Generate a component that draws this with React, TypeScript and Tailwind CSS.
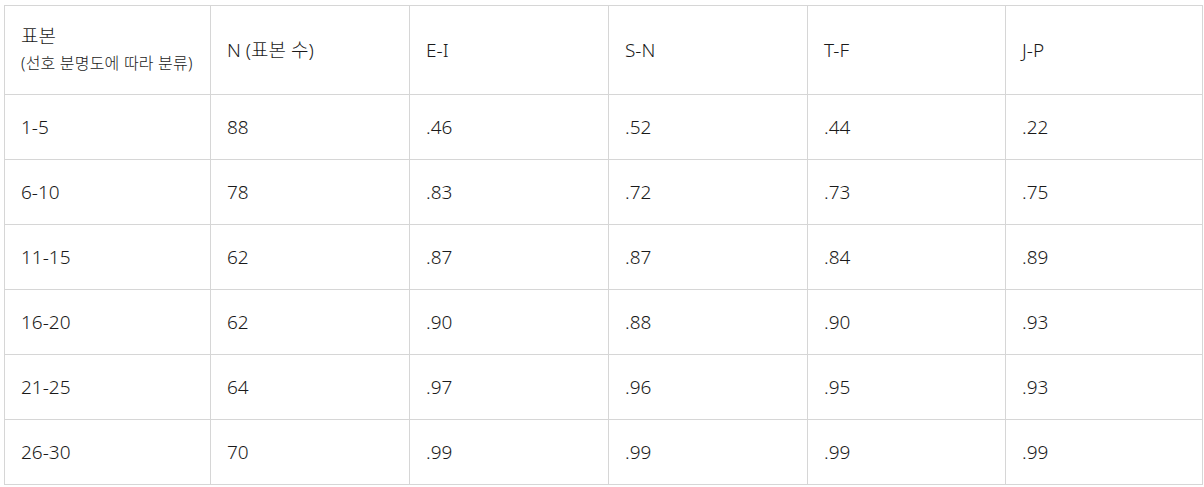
import React from 'react';

const rows = [
    ['1-5', '88', '.46', '.52', '.44', '.22'],
    ['6-10', '78', '.83', '.72', '.73', '.75'],
    ['11-15', '62', '.87', '.87', '.84', '.89'],
    ['16-20', '62', '.90', '.88', '.90', '.93'],
    ['21-25', '64', '.97', '.96', '.95', '.93'],
    ['26-30', '70', '.99', '.99', '.99', '.99'],
];

const widths = ['w-[206px]', 'w-[199px]', 'w-[199px]', 'w-[199px]', 'w-[198px]', 'w-[197px]'];

export default function App() {
    return (
        <div className="bg-white min-h-[487px] pt-[5px] pl-[4px] font-['Noto_Sans','Noto_Sans_CJK_KR',sans-serif] text-[#1a1a1a] font-light">
            <table className="border-collapse table-fixed w-[1199px]">
                <thead>
                    <tr>
                        <th className={`${widths[0]} h-[89px] border border-[#d6d6d6] pl-[16px] text-left align-middle font-light`}>
                            <div className="text-[19px] leading-[26px] -mt-[4px]">표본</div>
                            <div className="text-[16px] leading-[22px] mt-[3px] tracking-[0.2px] whitespace-nowrap">(선호 분명도에 따라 분류)</div>
                        </th>
                        {['N (표본 수)', 'E-I', 'S-N', 'T-F', 'J-P'].map((h, i) => (
                            <th key={h} className={`${widths[i + 1]} h-[89px] border border-[#d6d6d6] pl-[16px] text-left align-middle font-light text-[19px]`}>
                                {h}
                            </th>
                        ))}
                    </tr>
                </thead>
                <tbody>
                    {rows.map((r) => (
                        <tr key={r[0]}>
                            {r.map((c, i) => (
                                <td key={i} className="h-[65px] border border-[#d6d6d6] pl-[16px] text-[19px] align-middle">
                                    {c}
                                </td>
                            ))}
                        </tr>
                    ))}
                </tbody>
            </table>
        </div>
    );
}
